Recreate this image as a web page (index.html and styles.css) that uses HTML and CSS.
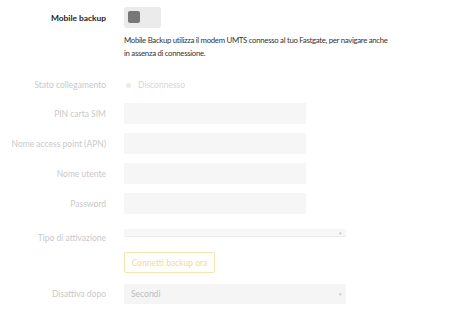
FILE: index.html
```html
<!DOCTYPE html>
<html lang="it">
<head>
    <meta charset="UTF-8">
    <meta name="viewport" content="width=device-width, initial-scale=1.0">
    <title>Mobile backup</title>
    <link rel="stylesheet" href="styles.css">
</head>
<body>
    <div class="panel">
        <div class="row row-toggle">
            <label class="label label-main">Mobile backup</label>
            <div class="toggle"><span class="knob"></span></div>
        </div>
        <p class="desc">Mobile Backup utilizza il modem UMTS connesso al tuo Fastgate, per navigare anche<br>in assenza di connessione.</p>

        <div class="row row-status">
            <label class="label">Stato collegamento</label>
            <div class="status"><span class="dot"></span>Disconnesso</div>
        </div>
        <div class="row">
            <label class="label">PIN carta SIM</label>
            <input class="field" type="text" disabled>
        </div>
        <div class="row">
            <label class="label">Nome access point (APN)</label>
            <input class="field" type="text" disabled>
        </div>
        <div class="row">
            <label class="label">Nome utente</label>
            <input class="field" type="text" disabled>
        </div>
        <div class="row">
            <label class="label">Password</label>
            <input class="field" type="password" disabled>
        </div>
        <div class="row row-type">
            <label class="label">Tipo di attivazione</label>
            <div class="select select-thin"><span class="arrow">&#9662;</span></div>
        </div>
        <div class="row row-button">
            <span class="label"></span>
            <button class="connect" disabled>Connetti backup ora</button>
        </div>
        <div class="row">
            <label class="label">Disattiva dopo</label>
            <div class="select select-full">Secondi<span class="arrow">&#9662;</span></div>
        </div>
    </div>
</body>
</html>
```

FILE: styles.css
```css
* {
    margin: 0;
    padding: 0;
    box-sizing: border-box;
}

body {
    font-family: 'Lato', 'Open Sans', sans-serif;
    background: #fff;
    color: #333;
}

.panel {
    padding-top: 7px;
}

.row {
    display: flex;
    align-items: center;
    margin-bottom: 9px;
}

.label {
    width: 124px;
    padding-right: 18px;
    text-align: right;
    font-size: 8.5px;
    color: #c9c9c9;
    white-space: nowrap;
}

.label-main {
    font-weight: bold;
    font-size: 8.4px;
    color: #222;
}

.row-toggle {
    margin-bottom: 6px;
}

.toggle {
    width: 37px;
    height: 21px;
    background: #ebebeb;
    border-radius: 3px;
    padding: 4px;
}

.knob {
    display: block;
    width: 12px;
    height: 12px;
    background: #777;
    border-radius: 2px;
}

.desc {
    margin-left: 124px;
    font-size: 7.8px;
    letter-spacing: -0.3px;
    line-height: 13px;
    color: #333;
    margin-bottom: 18px;
}

.row-status {
    height: 14px;
    margin-bottom: 11px;
}

.status {
    display: flex;
    align-items: center;
    font-size: 8.5px;
    color: #d6d6d6;
}

.dot {
    width: 5px;
    height: 5px;
    border-radius: 50%;
    background: #ececec;
    margin: 0 7px 0 2px;
}

.field {
    width: 182px;
    height: 21px;
    border: none;
    background: #f6f6f6;
}

.row-type {
    align-items: flex-start;
    margin-top: 15px;
    margin-bottom: 9px;
}

.row-type .label {
    padding-top: 4px;
}

.select {
    position: relative;
    width: 222px;
    background: #f5f5f5;
    font-size: 8.5px;
    color: #bdbdbd;
}

.select-thin {
    height: 8px;
    background: #f7f7f7;
    border-bottom: 1px solid #ececec;
}

.select-full {
    height: 20px;
    line-height: 20px;
    padding-left: 7px;
}

.arrow {
    position: absolute;
    right: 4px;
    top: 0;
    font-size: 5px;
    line-height: 20px;
    color: #c4c4c4;
}

.select-thin .arrow {
    line-height: 8px;
}

.connect {
    width: 91px;
    height: 21px;
    background: #fff;
    border: 1px solid #f5e6ad;
    border-radius: 2px;
    font-family: inherit;
    font-size: 8.5px;
    color: #f1db94;
}

.row-button {
    margin-bottom: 11px;
}
```
